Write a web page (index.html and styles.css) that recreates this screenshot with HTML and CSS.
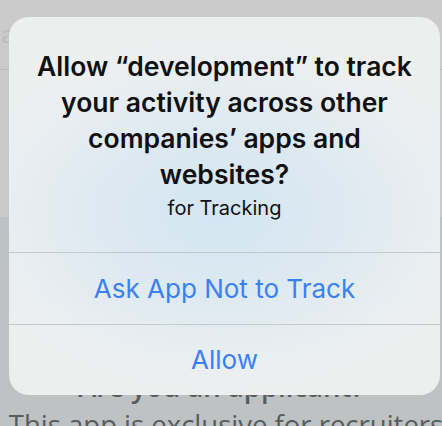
FILE: index.html
```html
<!DOCTYPE html>
<html lang="en">

<head>
    <meta charset="UTF-8">
    <meta name="viewport" content="width=device-width, initial-scale=1.0">
    <title>Sign in</title>
    <link rel="stylesheet" href="styles.css">
</head>

<body>
    <div class="page">
        <div class="field">Password</div>
        <div class="upper"></div>
        <div class="lower">
            <p class="question">Are you an applicant?</p>
            <p class="note">This app is exclusive for recruiters</p>
        </div>
    </div>

    <!-- Tracking permission alert -->
    <div class="alert">
        <div class="alert-body">
            <p class="alert-title">Allow “development” to track your activity across other companies’ apps and websites?</p>
            <p class="alert-message">for Tracking</p>
        </div>
        <button class="alert-button">Ask App Not to Track</button>
        <button class="alert-button">Allow</button>
    </div>
</body>

</html>
```

FILE: styles.css
```css
html {
    overflow: hidden;
}

body {
    margin: 0;
    width: 442px;
    height: 426px;
    overflow: hidden;
    position: relative;
    background: #bec2c3;
    font-family: Inter, 'Noto Sans', sans-serif;
}

.page {
    display: flex;
    flex-direction: column;
}

.field {
    height: 70px;
    box-sizing: border-box;
    padding: 20px 0 0 0;
    margin-left: -14px;
    font-size: 24px;
    color: #bdbdbd;
    background: #cbcbcb;
    border-bottom: 1px solid #b8b8b8;
}

.upper {
    height: 147px;
    background: #c9c9c9;
}

.lower {
    display: flex;
    flex-direction: column;
    align-items: center;
    padding-top: 151px;
    font-family: 'Open Sans', sans-serif;
    color: #595b5c;
}

.question {
    margin: 0;
    font-size: 27.5px;
    font-weight: 600;
    line-height: 37px;
    white-space: nowrap;
}

.note {
    margin: 1px 0 0 10px;
    font-size: 27.5px;
    line-height: 37px;
    white-space: nowrap;
}

/* alert */
.alert {
    position: absolute;
    left: 9px;
    top: 17px;
    width: 431px;
    height: 378px;
    border-radius: 20px;
    overflow: hidden;
    display: flex;
    flex-direction: column;
    background: radial-gradient(ellipse 62% 48% at 49% 52%, #d3e6f2 0%, #dde9f1 45%, #e9eef1 80%, #edefef 100%);
}

.alert-body {
    height: 236px;
    box-sizing: border-box;
    padding: 31px 16px 0;
    text-align: center;
    border-bottom: 1px solid #c3c8cb;
}

.alert-title {
    margin: 0;
    font-size: 26.5px;
    font-weight: 600;
    line-height: 36px;
    color: #111;
}

.alert-message {
    margin: 4px 0 0;
    font-size: 20px;
    line-height: 24px;
    color: #111;
}

.alert-button {
    flex: 1;
    border: none;
    background: none;
    font-family: Inter, 'Noto Sans', sans-serif;
    font-size: 26px;
    color: #3a80f5;
    padding: 0;
}

.alert-button + .alert-button {
    border-top: 1px solid #c3c8cb;
}
```
